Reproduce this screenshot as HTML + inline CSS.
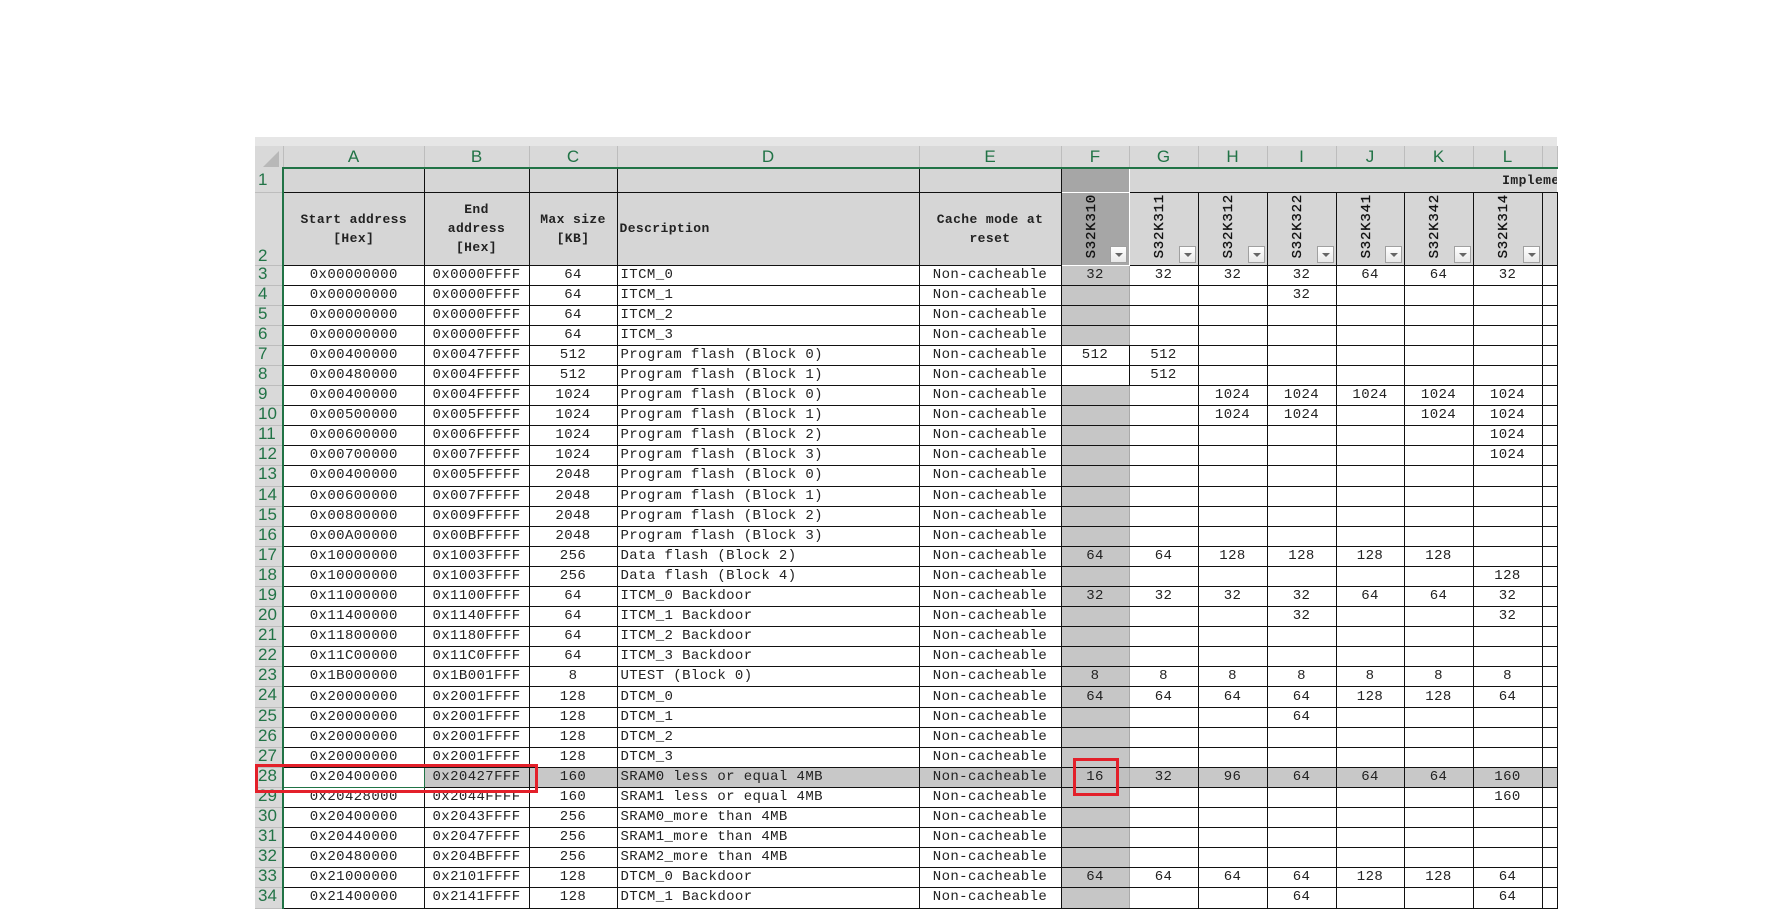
<!DOCTYPE html>
<html><head><meta charset="utf-8"><style>
body{margin:0;width:1771px;height:894px;background:#fff;overflow:hidden;position:relative;font-family:"Liberation Mono",monospace}
#band{position:absolute;left:255px;top:137px;width:1302px;height:9px;background:#e6e6e6}
table{position:absolute;left:255px;top:146px;border-collapse:collapse;table-layout:fixed;width:1302px}
td{padding:0;overflow:hidden;white-space:nowrap;font-size:14px;letter-spacing:0.4px;color:#222;border:1px solid #111;height:19px;line-height:19px}
tr.ch td{background:#d9d9d9;border:none;border-right:1px solid #bdbdbd;border-bottom:2px solid #217346;font-family:"Liberation Sans",sans-serif;font-size:17px;color:#217346;text-align:center;height:21px;line-height:21px;letter-spacing:0}
table tr td.rh{background:#d9d9d9;border:none;border-right:2px solid #217346;border-bottom:1px solid #bdbdbd;font-family:"Liberation Sans",sans-serif;font-size:17px;font-weight:normal;color:#217346;text-align:left;padding-left:3px;line-height:16px;vertical-align:top;letter-spacing:0}
table tr.h td.rh{vertical-align:bottom;line-height:18px}
tr.d td{height:19.1px}
.c{text-align:center}.l{text-align:left;padding-left:3px}
td.f{background:#c6c6c6;border-left:1px solid #aaa;border-right:1px solid #aaa}
tr.h td{background:#d6d6d6;font-weight:bold;text-align:center;font-size:13px;line-height:19px;white-space:normal}
tr.h td.fd{background:#a6a6a6;border:1px solid #fff}
.rot{position:relative;height:72px}
.rot span{position:absolute;left:21px;bottom:6px;writing-mode:vertical-rl;transform:rotate(180deg);font-weight:normal;font-size:14px;letter-spacing:0.8px;color:#111;-webkit-text-stroke:0.3px #111}
.dd{position:absolute;right:2px;bottom:2px;width:17px;height:17px;background:linear-gradient(#fff,#e8e8e8);border:1px solid #a0a0a0;box-sizing:border-box}
.dd:after{content:"";position:absolute;left:4px;top:6px;border-left:4px solid transparent;border-right:4px solid transparent;border-top:4px solid #666}
tr.sel td{background:#c8c8c8}
tr.sel td.f{background:#c0c0c0}
.box{position:absolute;border:3px solid #e3202a;box-sizing:border-box}
</style></head><body>
<div id="band"></div>
<table>
<colgroup><col style="width:28px"><col style="width:141px"><col style="width:105px"><col style="width:88px"><col style="width:302px"><col style="width:142px"><col style="width:68px"><col style="width:69px"><col style="width:69px"><col style="width:69px"><col style="width:68px"><col style="width:69px"><col style="width:69px"><col style="width:15px"></colgroup>
<tr class="ch"><td style="border-bottom:none;background:#d9d9d9"><div style="width:0;height:0;border-left:16px solid transparent;border-bottom:16px solid #b8b8b8;margin:3px 0 0 8px"></div></td><td>A</td><td>B</td><td>C</td><td>D</td><td>E</td><td>F</td><td>G</td><td>H</td><td>I</td><td>J</td><td>K</td><td>L</td><td></td></tr>
<tr class="h" style="height:24px"><td class="rh" style="vertical-align:middle">1</td><td></td><td></td><td></td><td></td><td></td><td class="fd"></td><td colspan="7" style="text-align:right;border-left:none;border-right:none;overflow:hidden"><span style="position:relative;left:60px">Implementation</span></td></tr>
<tr class="h" style="height:72px"><td class="rh">2</td><td>Start address<br>[Hex]</td><td>End<br>address<br>[Hex]</td><td>Max size<br>[KB]</td><td style="text-align:left;padding-left:2px">Description</td><td>Cache mode at<br>reset</td>
<td class="fd"><div class="rot"><span>S32K310</span><div class="dd"></div></div></td>
<td><div class="rot"><span>S32K311</span><div class="dd"></div></div></td>
<td><div class="rot"><span>S32K312</span><div class="dd"></div></div></td>
<td><div class="rot"><span>S32K322</span><div class="dd"></div></div></td>
<td><div class="rot"><span>S32K341</span><div class="dd"></div></div></td>
<td><div class="rot"><span>S32K342</span><div class="dd"></div></div></td>
<td><div class="rot"><span>S32K314</span><div class="dd"></div></div></td><td></td></tr>
<tr class="d"><td class="rh">3</td><td class="c">0x00000000</td><td class="c">0x0000FFFF</td><td class="c">64</td><td class="l">ITCM_0</td><td class="c">Non-cacheable</td><td class="f c">32</td><td class="c">32</td><td class="c">32</td><td class="c">32</td><td class="c">64</td><td class="c">64</td><td class="c">32</td><td></td></tr>
<tr class="d"><td class="rh">4</td><td class="c">0x00000000</td><td class="c">0x0000FFFF</td><td class="c">64</td><td class="l">ITCM_1</td><td class="c">Non-cacheable</td><td class="f c"></td><td></td><td></td><td class="c">32</td><td></td><td></td><td></td><td></td></tr>
<tr class="d"><td class="rh">5</td><td class="c">0x00000000</td><td class="c">0x0000FFFF</td><td class="c">64</td><td class="l">ITCM_2</td><td class="c">Non-cacheable</td><td class="f"></td><td></td><td></td><td></td><td></td><td></td><td></td><td></td></tr>
<tr class="d"><td class="rh">6</td><td class="c">0x00000000</td><td class="c">0x0000FFFF</td><td class="c">64</td><td class="l">ITCM_3</td><td class="c">Non-cacheable</td><td class="f"></td><td></td><td></td><td></td><td></td><td></td><td></td><td></td></tr>
<tr class="d"><td class="rh">7</td><td class="c">0x00400000</td><td class="c">0x0047FFFF</td><td class="c">512</td><td class="l">Program flash (Block 0)</td><td class="c">Non-cacheable</td><td class="c" style="background:#fff">512</td><td class="c">512</td><td></td><td></td><td></td><td></td><td></td><td></td></tr>
<tr class="d"><td class="rh">8</td><td class="c">0x00480000</td><td class="c">0x004FFFFF</td><td class="c">512</td><td class="l">Program flash (Block 1)</td><td class="c">Non-cacheable</td><td style="background:#fff"></td><td class="c">512</td><td></td><td></td><td></td><td></td><td></td><td></td></tr>
<tr class="d"><td class="rh">9</td><td class="c">0x00400000</td><td class="c">0x004FFFFF</td><td class="c">1024</td><td class="l">Program flash (Block 0)</td><td class="c">Non-cacheable</td><td class="f"></td><td></td><td class="c">1024</td><td class="c">1024</td><td class="c">1024</td><td class="c">1024</td><td class="c">1024</td><td></td></tr>
<tr class="d"><td class="rh">10</td><td class="c">0x00500000</td><td class="c">0x005FFFFF</td><td class="c">1024</td><td class="l">Program flash (Block 1)</td><td class="c">Non-cacheable</td><td class="f"></td><td></td><td class="c">1024</td><td class="c">1024</td><td></td><td class="c">1024</td><td class="c">1024</td><td></td></tr>
<tr class="d"><td class="rh">11</td><td class="c">0x00600000</td><td class="c">0x006FFFFF</td><td class="c">1024</td><td class="l">Program flash (Block 2)</td><td class="c">Non-cacheable</td><td class="f"></td><td></td><td></td><td></td><td></td><td></td><td class="c">1024</td><td></td></tr>
<tr class="d"><td class="rh">12</td><td class="c">0x00700000</td><td class="c">0x007FFFFF</td><td class="c">1024</td><td class="l">Program flash (Block 3)</td><td class="c">Non-cacheable</td><td class="f"></td><td></td><td></td><td></td><td></td><td></td><td class="c">1024</td><td></td></tr>
<tr class="d"><td class="rh">13</td><td class="c">0x00400000</td><td class="c">0x005FFFFF</td><td class="c">2048</td><td class="l">Program flash (Block 0)</td><td class="c">Non-cacheable</td><td class="f"></td><td></td><td></td><td></td><td></td><td></td><td></td><td></td></tr>
<tr class="d"><td class="rh">14</td><td class="c">0x00600000</td><td class="c">0x007FFFFF</td><td class="c">2048</td><td class="l">Program flash (Block 1)</td><td class="c">Non-cacheable</td><td class="f"></td><td></td><td></td><td></td><td></td><td></td><td></td><td></td></tr>
<tr class="d"><td class="rh">15</td><td class="c">0x00800000</td><td class="c">0x009FFFFF</td><td class="c">2048</td><td class="l">Program flash (Block 2)</td><td class="c">Non-cacheable</td><td class="f"></td><td></td><td></td><td></td><td></td><td></td><td></td><td></td></tr>
<tr class="d"><td class="rh">16</td><td class="c">0x00A00000</td><td class="c">0x00BFFFFF</td><td class="c">2048</td><td class="l">Program flash (Block 3)</td><td class="c">Non-cacheable</td><td class="f"></td><td></td><td></td><td></td><td></td><td></td><td></td><td></td></tr>
<tr class="d"><td class="rh">17</td><td class="c">0x10000000</td><td class="c">0x1003FFFF</td><td class="c">256</td><td class="l">Data flash (Block 2)</td><td class="c">Non-cacheable</td><td class="f c">64</td><td class="c">64</td><td class="c">128</td><td class="c">128</td><td class="c">128</td><td class="c">128</td><td></td><td></td></tr>
<tr class="d"><td class="rh">18</td><td class="c">0x10000000</td><td class="c">0x1003FFFF</td><td class="c">256</td><td class="l">Data flash (Block 4)</td><td class="c">Non-cacheable</td><td class="f"></td><td></td><td></td><td></td><td></td><td></td><td class="c">128</td><td></td></tr>
<tr class="d"><td class="rh">19</td><td class="c">0x11000000</td><td class="c">0x1100FFFF</td><td class="c">64</td><td class="l">ITCM_0 Backdoor</td><td class="c">Non-cacheable</td><td class="f c">32</td><td class="c">32</td><td class="c">32</td><td class="c">32</td><td class="c">64</td><td class="c">64</td><td class="c">32</td><td></td></tr>
<tr class="d"><td class="rh">20</td><td class="c">0x11400000</td><td class="c">0x1140FFFF</td><td class="c">64</td><td class="l">ITCM_1 Backdoor</td><td class="c">Non-cacheable</td><td class="f"></td><td></td><td></td><td class="c">32</td><td></td><td></td><td class="c">32</td><td></td></tr>
<tr class="d"><td class="rh">21</td><td class="c">0x11800000</td><td class="c">0x1180FFFF</td><td class="c">64</td><td class="l">ITCM_2 Backdoor</td><td class="c">Non-cacheable</td><td class="f"></td><td></td><td></td><td></td><td></td><td></td><td></td><td></td></tr>
<tr class="d"><td class="rh">22</td><td class="c">0x11C00000</td><td class="c">0x11C0FFFF</td><td class="c">64</td><td class="l">ITCM_3 Backdoor</td><td class="c">Non-cacheable</td><td class="f"></td><td></td><td></td><td></td><td></td><td></td><td></td><td></td></tr>
<tr class="d"><td class="rh">23</td><td class="c">0x1B000000</td><td class="c">0x1B001FFF</td><td class="c">8</td><td class="l">UTEST (Block 0)</td><td class="c">Non-cacheable</td><td class="f c">8</td><td class="c">8</td><td class="c">8</td><td class="c">8</td><td class="c">8</td><td class="c">8</td><td class="c">8</td><td></td></tr>
<tr class="d"><td class="rh">24</td><td class="c">0x20000000</td><td class="c">0x2001FFFF</td><td class="c">128</td><td class="l">DTCM_0</td><td class="c">Non-cacheable</td><td class="f c">64</td><td class="c">64</td><td class="c">64</td><td class="c">64</td><td class="c">128</td><td class="c">128</td><td class="c">64</td><td></td></tr>
<tr class="d"><td class="rh">25</td><td class="c">0x20000000</td><td class="c">0x2001FFFF</td><td class="c">128</td><td class="l">DTCM_1</td><td class="c">Non-cacheable</td><td class="f"></td><td></td><td></td><td class="c">64</td><td></td><td></td><td></td><td></td></tr>
<tr class="d"><td class="rh">26</td><td class="c">0x20000000</td><td class="c">0x2001FFFF</td><td class="c">128</td><td class="l">DTCM_2</td><td class="c">Non-cacheable</td><td class="f"></td><td></td><td></td><td></td><td></td><td></td><td></td><td></td></tr>
<tr class="d"><td class="rh">27</td><td class="c">0x20000000</td><td class="c">0x2001FFFF</td><td class="c">128</td><td class="l">DTCM_3</td><td class="c">Non-cacheable</td><td class="f"></td><td></td><td></td><td></td><td></td><td></td><td></td><td></td></tr>
<tr class="d sel"><td class="rh">28</td><td class="c" style="background:#fff;border:1px solid #217346">0x20400000</td><td class="c">0x20427FFF</td><td class="c">160</td><td class="l">SRAM0 less or equal 4MB</td><td class="c">Non-cacheable</td><td class="f c">16</td><td class="c">32</td><td class="c">96</td><td class="c">64</td><td class="c">64</td><td class="c">64</td><td class="c">160</td><td></td></tr>
<tr class="d"><td class="rh">29</td><td class="c">0x20428000</td><td class="c">0x2044FFFF</td><td class="c">160</td><td class="l">SRAM1 less or equal 4MB</td><td class="c">Non-cacheable</td><td class="f"></td><td></td><td></td><td></td><td></td><td></td><td class="c">160</td><td></td></tr>
<tr class="d"><td class="rh">30</td><td class="c">0x20400000</td><td class="c">0x2043FFFF</td><td class="c">256</td><td class="l">SRAM0_more than 4MB</td><td class="c">Non-cacheable</td><td class="f"></td><td></td><td></td><td></td><td></td><td></td><td></td><td></td></tr>
<tr class="d"><td class="rh">31</td><td class="c">0x20440000</td><td class="c">0x2047FFFF</td><td class="c">256</td><td class="l">SRAM1_more than 4MB</td><td class="c">Non-cacheable</td><td class="f"></td><td></td><td></td><td></td><td></td><td></td><td></td><td></td></tr>
<tr class="d"><td class="rh">32</td><td class="c">0x20480000</td><td class="c">0x204BFFFF</td><td class="c">256</td><td class="l">SRAM2_more than 4MB</td><td class="c">Non-cacheable</td><td class="f"></td><td></td><td></td><td></td><td></td><td></td><td></td><td></td></tr>
<tr class="d"><td class="rh">33</td><td class="c">0x21000000</td><td class="c">0x2101FFFF</td><td class="c">128</td><td class="l">DTCM_0 Backdoor</td><td class="c">Non-cacheable</td><td class="f c">64</td><td class="c">64</td><td class="c">64</td><td class="c">64</td><td class="c">128</td><td class="c">128</td><td class="c">64</td><td></td></tr>
<tr class="d"><td class="rh">34</td><td class="c">0x21400000</td><td class="c">0x2141FFFF</td><td class="c">128</td><td class="l">DTCM_1 Backdoor</td><td class="c">Non-cacheable</td><td class="f"></td><td></td><td></td><td class="c">64</td><td></td><td></td><td class="c">64</td><td></td></tr>
</table>
<div class="box" style="left:255px;top:764px;width:283px;height:29px"></div>
<div class="box" style="left:1073px;top:758px;width:46px;height:38px"></div>
</body></html>
